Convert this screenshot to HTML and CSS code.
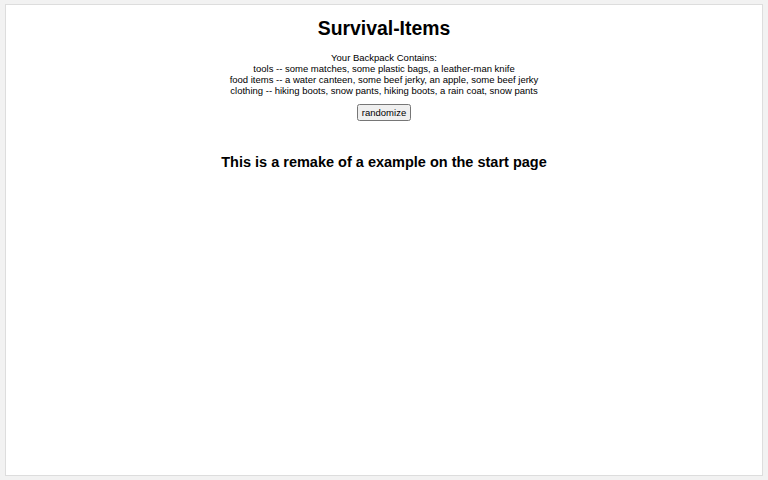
FILE: index.html
```html
<!DOCTYPE html>
<html lang="en">
<head>
    <meta charset="UTF-8">
    <meta name="viewport" content="width=device-width, initial-scale=1.0">
    <title>Survival-Items</title>
    <link rel="stylesheet" href="styles.css">
</head>
<body>
    <div class="page">
        <h1>Survival-Items</h1>
        <div class="backpack">
            <div>Your Backpack Contains:</div>
            <div>tools -- some matches, some plastic bags, a leather-man knife</div>
            <div>food items -- a water canteen, some beef jerky, an apple, some beef jerky</div>
            <div>clothing -- hiking boots, snow pants, hiking boots, a rain coat, snow pants</div>
        </div>
        <button class="randomize">randomize</button>
        <h2>This is a remake of a example on the start page</h2>
    </div>
</body>
</html>
```

FILE: styles.css
```css
body {
    font-family: "Liberation Sans", Arial, sans-serif;
    background-color: #f2f2f2;
    margin: 0;
    padding: 4px 5px;
}
.page {
    background-color: #fff;
    border: 1px solid #ddd;
    height: 472px;
    text-align: center;
    box-sizing: border-box;
    padding-top: 1px;
}
h1 {
    font-size: 19.4px;
    margin: 11px 0 12px;
}
.backpack {
    font-size: 9.5px;
    line-height: 11px;
}
.randomize {
    font-family: "Liberation Sans", Arial, sans-serif;
    font-size: 9.5px;
    margin-top: 8px;
    padding: 1px 3px;
}
h2 {
    font-size: 14.5px;
    margin: 33px 0 0;
}
```
